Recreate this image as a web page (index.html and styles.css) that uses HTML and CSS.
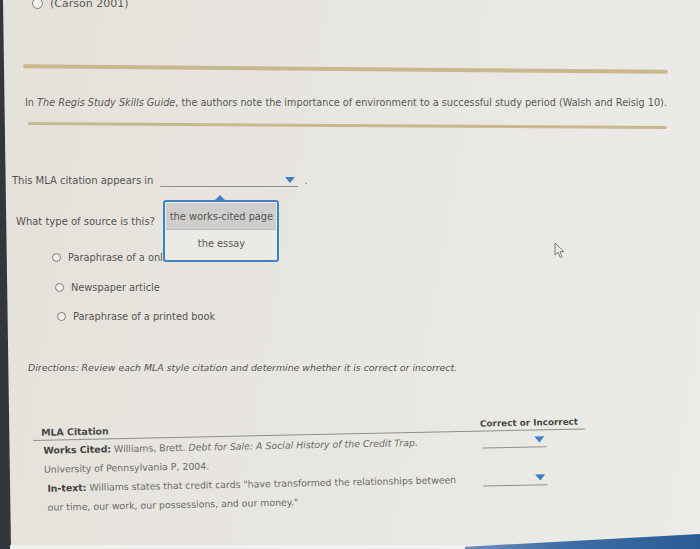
FILE: index.html
```html
<!DOCTYPE html>
<html>
<head>
<meta charset="utf-8">
<title>MLA Citation Quiz</title>
<link rel="stylesheet" href="styles.css">
</head>
<body>
<div class="screen">
  <div class="prev"><span class="radio"></span><span>(Carson 2001)</span></div>
  <div class="rule rule-top"></div>
  <p class="sentence">In <i>The Regis Study Skills Guide</i>, the authors note the importance of environment to a successful study period (Walsh and Reisig 10).</p>
  <div class="rule rule-bottom"></div>

  <div class="q1">
    <span>This MLA citation appears in</span>
    <span class="select select-wide">
      <span class="arrow"></span>
      <span class="popup">
        <span class="caret"></span>
        <span class="opt opt-active">the works-cited page</span>
        <span class="opt">the essay</span>
      </span>
    </span>
    <span class="period">.</span>
  </div>

  <div class="q2">What type of source is this?</div>

  <div class="options">
    <div class="option o1"><span class="radio"></span><span>Paraphrase of a online article</span></div>
    <div class="option o2"><span class="radio"></span><span>Newspaper article</span></div>
    <div class="option o3"><span class="radio"></span><span>Paraphrase of a printed book</span></div>
  </div>

  <p class="directions">Directions: Review each MLA style citation and determine whether it is correct or incorrect.</p>

  <div class="table">
    <div class="thead">
      <div class="th">MLA Citation</div>
      <div class="th th-right">Correct or Incorrect</div>
    </div>
    <div class="trow">
      <div class="cite"><b>Works Cited:</b> Williams, Brett. <i>Debt for Sale: A Social History of the Credit Trap.</i><br>University of Pennsylvania P, 2004.</div>
      <div class="cell"><span class="select select-small"><span class="arrow"></span></span></div>
    </div>
    <div class="trow">
      <div class="cite cite-2"><b>In-text:</b> Williams states that credit cards "have transformed the relationships between<br>our time, our work, our possessions, and our money."</div>
      <div class="cell"><span class="select select-small"><span class="arrow"></span></span></div>
    </div>
  </div>

  <svg class="cursor" width="11" height="17" viewBox="0 0 11 17">
    <path d="M1 1 L1 13 L4 10.3 L6.3 15.5 L8.2 14.7 L6 9.6 L9.8 9.6 Z" fill="#ecebe7" stroke="#7a7a7a" stroke-width="1" stroke-linejoin="round"/>
  </svg>
</div>
<div class="bezel"></div>
<div class="taskbar"></div>
</body>
</html>
```

FILE: styles.css
```css
* { box-sizing: border-box; }
html, body { margin: 0; padding: 0; }
body {
  width: 700px;
  height: 549px;
  overflow: hidden;
  position: relative;
  background: #33363b;
  font-family: "DejaVu Sans", Verdana, sans-serif;
  color: #555452;
}
.screen {
  position: relative;
  height: 549px;
  background: linear-gradient(100deg, #e4e1da 0%, #e8e6e1 45%, #ebebe8 100%);
  clip-path: polygon(3px 0, 100% 0, 100% 100%, 11px 100%);
  overflow: hidden;
}

.radio {
  display: inline-block;
  width: 9px;
  height: 9px;
  border: 1px solid #7d7c79;
  border-radius: 50%;
  background: #f1f0ed;
  flex: none;
}

.prev {
  display: flex;
  align-items: center;
  gap: 7px;
  margin-top: -4px;
  height: 14px;
  padding-left: 32px;
  font-size: 11px;
  color: #5a5957;
}
.prev .radio { width: 11px; height: 11px; }

.rule {
  height: 4px;
  background: #c9b88e;
  border-radius: 2px;
}
.rule-top { margin: 57px 32px 0 23px; transform: rotate(0.5deg); }
.rule-bottom { margin: 14px 33px 0 28px; height: 3px; transform: rotate(0.35deg); }

.sentence {
  margin: 25px 0 0 25px;
  font-size: 9.7px;
  line-height: 14px;
  color: #5a5957;
  white-space: nowrap;
}

.q1 {
  display: flex;
  align-items: center;
  margin-top: 46px;
  padding-left: 12px;
  height: 14px;
  font-size: 10px;
  color: #555452;
}
.period { margin-left: 6px; color: #777; }

.select {
  position: relative;
  display: inline-block;
  border-bottom: 1px solid #8f8f8d;
}
.select-wide { width: 138px; height: 14px; margin-left: 7px; }
.arrow {
  position: absolute;
  right: 3px;
  top: 4px;
  width: 0;
  height: 0;
  border-left: 5px solid transparent;
  border-right: 5px solid transparent;
  border-top: 6px solid #3f7fc0;
}

.popup {
  position: absolute;
  left: 3px;
  top: 27px;
  width: 116px;
  height: 62px;
  border: 2px solid #3f82c4;
  border-radius: 3px;
  background: #ebeae6;
  display: flex;
  flex-direction: column;
  padding: 1px;
  z-index: 5;
}
.caret {
  position: absolute;
  left: 50px;
  top: -7px;
  width: 0;
  height: 0;
  border-left: 5px solid transparent;
  border-right: 5px solid transparent;
  border-bottom: 5px solid #3f82c4;
}
.opt {
  display: flex;
  align-items: center;
  justify-content: center;
  height: 27px;
  font-size: 9.8px;
  color: #555452;
  white-space: nowrap;
}
.opt-active {
  background: #cfcecc;
  border-bottom: 1px solid #bdbcba;
}

.q2 {
  margin-top: 28px;
  padding-left: 16px;
  height: 14px;
  line-height: 14px;
  font-size: 10px;
}

.options {
  display: flex;
  flex-direction: column;
  gap: 16px;
  margin-top: 21px;
}
.option {
  display: flex;
  align-items: center;
  gap: 7px;
  height: 14px;
  font-size: 9.8px;
  white-space: nowrap;
}
.o1 { padding-left: 52px; }
.o2 { padding-left: 55px; }
.o3 { padding-left: 57px; margin-top: -1px; }

.directions {
  margin: 38px 0 0 28px;
  font-size: 9.4px;
  line-height: 14px;
  font-style: italic;
  color: #555452;
  white-space: nowrap;
}

.table {
  margin: 51px 0 0 33px;
  width: 552px;
  transform: rotate(-1.2deg);
  transform-origin: 0 0;
  font-size: 9.4px;
}
.thead {
  display: grid;
  grid-template-columns: 447px 105px;
  border-bottom: 1.5px solid #8e8d8a;
}
.th {
  font-weight: bold;
  color: #4a4947;
  line-height: 14px;
  padding-left: 8px;
}
.th-right { padding-left: 0; font-size: 8.8px; }
.trow {
  display: grid;
  grid-template-columns: 447px 105px;
}
.cite {
  padding-left: 10px;
  line-height: 19px;
  color: #6c6b69;
  white-space: nowrap;
}
.cite b { color: #434240; }
.cite-2 { padding-left: 13px; }
.cell { padding-top: 5px; padding-left: 2px; }
.select-small { width: 64px; height: 12px; display: block; }
.select-small .arrow { right: 2px; top: 1px; }

.cursor {
  position: absolute;
  left: 554px;
  top: 242px;
}

.bezel {
  position: absolute;
  left: 10px;
  right: 0;
  bottom: 0;
  height: 4px;
  background: #f1f1ef;
}
.taskbar {
  position: absolute;
  right: 0;
  bottom: 0;
  width: 235px;
  height: 15px;
  background: linear-gradient(90deg, #6d8fb8 0%, #3f6fa6 40%, #2a5b94 100%);
  clip-path: polygon(0 85%, 100% 0, 100% 100%, 0 100%);
}
```
